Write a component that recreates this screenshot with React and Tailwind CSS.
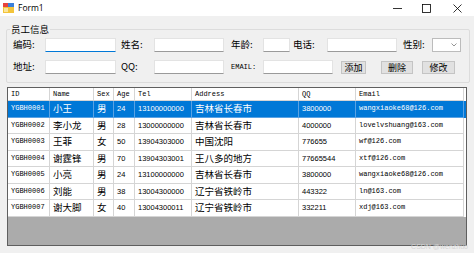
import React from "react";

const rows = [
  ["YGBH0001", "小王", "男", "24", "13100000000", "吉林省长春市", "3800000", "wangxiaoke68@126.com"],
  ["YGBH0002", "李小龙", "男", "28", "13000000000", "吉林省长春市", "4000000", "lovelvshuang@163.com"],
  ["YGBH0003", "王菲", "女", "50", "13904303000", "中国沈阳", "776655", "wf@126.com"],
  ["YGBH0004", "谢霆锋", "男", "70", "13904303001", "王八多的地方", "77665544", "xtf@126.com"],
  ["YGBH0005", "小亮", "男", "24", "13100000000", "吉林省长春市", "3800000", "wangxiaoke68@126.com"],
  ["YGBH0006", "刘能", "男", "38", "13004300000", "辽宁省铁岭市", "443322", "ln@163.com"],
  ["YGBH0007", "谢大脚", "女", "40", "13004300011", "辽宁省铁岭市", "332211", "xdj@163.com"],
];

const cols = [
  { name: "ID", w: "w-[42px]", kind: "mono" },
  { name: "Name", w: "w-[44px]", kind: "cjk" },
  { name: "Sex", w: "w-[20px]", kind: "cjk" },
  { name: "Age", w: "w-[21px]", kind: "num" },
  { name: "Tel", w: "w-[57px]", kind: "num" },
  { name: "Address", w: "w-[107px]", kind: "cjk" },
  { name: "QQ", w: "w-[57px]", kind: "num" },
  { name: "Email", w: "w-[108px]", kind: "mono" },
];

const cjk = "font-['Noto_Sans_CJK_SC',sans-serif]";
const mono = "font-['Liberation_Mono','Noto_Sans_CJK_SC',monospace]";
const sans = "font-['Liberation_Sans','Noto_Sans_CJK_SC',sans-serif]";

function cellFont(kind) {
  if (kind === "mono") return `${mono} text-[7px]`;
  if (kind === "num") return `${sans} text-[7.5px]`;
  return `${cjk} text-[9.5px]`;
}

function Label({ children, className = "" }) {
  return <span className={`${cjk} text-[9.5px] leading-none text-black shrink-0 ${className}`}>{children}</span>;
}

function TextBox({ className = "", focused }) {
  return (
    <div
      className={`h-[14px] bg-white shrink-0 border border-[#e3e3e3] ${
        focused ? "border-b-[#0078d7]" : "border-b-[#9a9a9a]"
      } ${className}`}
    />
  );
}

function Btn({ children, className = "" }) {
  return (
    <div
      className={`h-[13px] shrink-0 bg-[#e1e1e1] border border-[#c4c4c4] flex items-center justify-center ${cjk} text-[9px] leading-none text-black ${className}`}
    >
      {children}
    </div>
  );
}

export default function App() {
  return (
    <div className="w-[474px] h-[253px] bg-[#f0f0f0] overflow-hidden flex flex-col relative">
      {/* title bar */}
      <div className="h-[16px] bg-white flex items-center shrink-0">
        <svg width="11" height="10" viewBox="0 0 11 10" className="ml-[3px]">
          <rect x="0" y="0" width="5" height="4" fill="#e8433b" />
          <rect x="5" y="0" width="6" height="4" fill="#3b7fd9" />
          <rect x="0" y="4" width="11" height="6" fill="#f3c43a" />
          <rect x="1" y="5" width="4" height="4" fill="#fbe59a" />
        </svg>
        <span className="ml-[4px] font-['Open_Sans',sans-serif] text-[8.5px] leading-none text-black">Form1</span>
        <div className="ml-auto flex items-center h-full">
          <svg width="9" height="9" viewBox="0 0 9 9" className="mr-[20px]">
            <line x1="0" y1="4.5" x2="9" y2="4.5" stroke="#000" strokeWidth="0.8" />
          </svg>
          <svg width="9" height="9" viewBox="0 0 9 9" className="mr-[22px]">
            <rect x="0.5" y="0.5" width="8" height="8" fill="none" stroke="#000" strokeWidth="0.8" />
          </svg>
          <svg width="9" height="9" viewBox="0 0 9 9" className="mr-[12px]">
            <path d="M0.5 0.5 L8.5 8.5 M8.5 0.5 L0.5 8.5" stroke="#000" strokeWidth="0.8" />
          </svg>
        </div>
      </div>

      {/* group box */}
      <fieldset className="ml-[6px] mt-[8px] w-[464px] h-[59px] border border-[#dcdcdc] rounded-[2px] relative shrink-0">
        <legend className={`ml-[3px] px-[1px] ${cjk} text-[9.5px] leading-[10px] text-black`}>员工信息</legend>
        <div className="flex items-center h-[14px] mt-[4px]">
          <Label className="ml-[6px] w-[32px]">编码:</Label>
          <TextBox className="w-[71px]" focused />
          <Label className="ml-[5px] w-[33px]">姓名:</Label>
          <TextBox className="w-[70px]" />
          <Label className="ml-[7px] w-[32px]">年龄:</Label>
          <TextBox className="w-[27px]" />
          <Label className="ml-[3px] w-[34px]">电话:</Label>
          <TextBox className="w-[70px]" />
          <Label className="ml-[6px] w-[29px]">性别:</Label>
          <div className="w-[29px] h-[14px] bg-white border border-[#bcbcbc] flex items-center justify-end pr-[3px] shrink-0">
            <svg width="6" height="4" viewBox="0 0 6 4">
              <path d="M0.5 0.5 L3 3 L5.5 0.5" fill="none" stroke="#7a7a7a" strokeWidth="0.8" />
            </svg>
          </div>
        </div>
        <div className="flex items-center h-[14px] mt-[8px]">
          <Label className="ml-[6px] w-[32px]">地址:</Label>
          <TextBox className="w-[71px]" />
          <Label className="ml-[5px] w-[33px]">QQ:</Label>
          <TextBox className="w-[70px]" />
          <span className={`${mono} text-[7px] leading-none ml-[7px] w-[32px] shrink-0`}>EMAIL:</span>
          <TextBox className="w-[70px]" />
          <Btn className="ml-[8px] w-[25px]">添加</Btn>
          <Btn className="ml-[15px] w-[32px]">删除</Btn>
          <Btn className="ml-[9px] w-[33px]">修改</Btn>
        </div>
      </fieldset>

      {/* data grid */}
      <div className="ml-[7px] mt-[4px] w-[460px] h-[159px] border border-[#5f5f5f] bg-[#ababab] flex flex-col shrink-0">
        <div className="flex h-[13px] bg-white shrink-0">
          {cols.map((c) => (
            <div
              key={c.name}
              className={`${c.w} shrink-0 h-full border-r border-b border-[#d5d5d5] flex items-center pl-[3px] ${mono} text-[7px] leading-none text-black`}
            >
              {c.name}
            </div>
          ))}
        </div>
        {rows.map((r, i) => {
          const sel = i === 0;
          return (
            <div key={i} className={`flex h-[16.5px] shrink-0 ${sel ? "bg-[#0078d7]" : "bg-white"}`}>
              {r.map((v, j) => (
                <div
                  key={j}
                  className={`${cols[j].w} shrink-0 h-full border-r border-b ${
                    sel ? "border-[#5aa2e3]" : "border-[#d5d5d5]"
                  } flex items-center pl-[3px] whitespace-nowrap overflow-hidden leading-none ${cellFont(cols[j].kind)} ${
                    sel ? "text-white" : "text-black"
                  }`}
                >
                  {v}
                </div>
              ))}
            </div>
          );
        })}
      </div>

      <span className={`absolute right-[6px] bottom-[3px] ${sans} text-[7px] leading-none text-[#d4d4d4]`}>CSDN @wenzhuo</span>
    </div>
  );
}
